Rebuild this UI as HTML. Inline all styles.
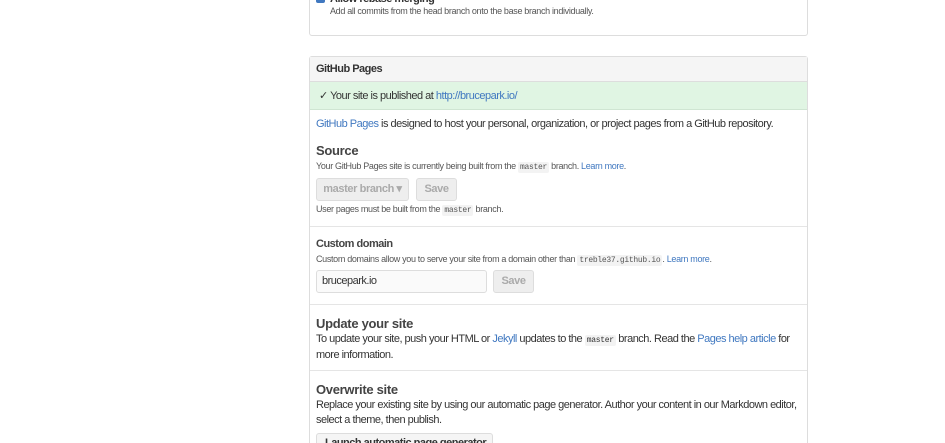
<!DOCTYPE html><html><head><style>
html,body{margin:0;width:945px;height:443px;overflow:hidden}
body{background:#fff;font-family:"Liberation Sans",sans-serif;color:#333;position:relative}
.a{position:absolute;white-space:nowrap}
.t{font-size:11px;letter-spacing:-0.5px}
.s{font-size:9px;letter-spacing:-0.33px;color:#555}
a{color:#4078c0;text-decoration:none}
code{font-family:"Liberation Mono",monospace;font-size:8px;letter-spacing:-0.3px;background:#f3f3f3;padding:1px 2px;border-radius:2px}
.btn{position:absolute;border:1px solid #ddd;background:#eee;border-radius:3px;color:#aaa;font-weight:bold;font-size:11px;letter-spacing:-0.4px;text-align:center;box-sizing:border-box}
.hr{position:absolute;left:310px;width:497px;height:1px;background:#e5e5e5}
</style></head><body>
<div style="position:absolute;left:309px;top:-5px;width:497px;height:39px;border:1px solid #ddd;border-radius:3px"></div>
<div class="a" style="left:316px;top:-6px;width:9px;height:9px;background:#4078c0;border-radius:2px"></div>
<div class="a t" style="left:330px;top:-7px;font-weight:bold">Allow rebase merging</div>
<div class="a s" style="left:330px;top:6px">Add all commits from the head branch onto the base branch individually.</div>

<div style="position:absolute;left:309px;top:56px;width:497px;height:400px;border:1px solid #ddd;border-radius:3px"></div>
<div style="position:absolute;left:310px;top:57px;width:497px;height:24px;background:#f5f5f5;border-bottom:1px solid #ddd"></div>
<div class="a t" style="left:316px;top:63px;font-weight:bold">GitHub Pages</div>
<div style="position:absolute;left:310px;top:82px;width:497px;height:27px;background:#e0f5e3;border-bottom:1px solid #cfe5d2"></div>
<div class="a t" style="left:319px;top:89px">✓ Your site is published at <a>http://brucepark.io/</a></div>
<div class="a t" style="left:316px;top:118px"><a>GitHub Pages</a> is designed to host your personal, organization, or project pages from a GitHub repository.</div>
<div class="a" style="left:316px;top:143px;font-size:13px;font-weight:bold;color:#444;letter-spacing:-0.3px">Source</div>
<div class="a s" style="left:316px;top:161px">Your GitHub Pages site is currently being built from the <code>master</code> branch. <a>Learn more</a>.</div>
<div class="btn" style="left:316px;top:178px;width:93px;height:23px;line-height:21px">master branch ▾</div>
<div class="btn" style="left:416px;top:178px;width:41px;height:23px;line-height:21px">Save</div>
<div class="a s" style="left:316px;top:204px">User pages must be built from the <code>master</code> branch.</div>
<div class="hr" style="top:226px"></div>
<div class="a t" style="left:316px;top:238px;font-weight:bold;color:#444">Custom domain</div>
<div class="a s" style="left:316px;top:254px">Custom domains allow you to serve your site from a domain other than <code>treble37.github.io</code>. <a>Learn more</a>.</div>
<div style="position:absolute;left:316px;top:270px;width:171px;height:23px;border:1px solid #ddd;border-radius:3px;background:#fafafa;box-sizing:border-box"></div>
<div class="a t" style="left:322px;top:275px">brucepark.io</div>
<div class="btn" style="left:493px;top:270px;width:41px;height:23px;line-height:21px">Save</div>
<div class="hr" style="top:304px"></div>
<div class="a" style="left:316px;top:316px;font-size:13px;font-weight:bold;color:#444;letter-spacing:-0.3px">Update your site</div>
<div class="a t" style="left:316px;top:332px;line-height:15px">To update your site, push your HTML or <a>Jekyll</a> updates to the <code>master</code> branch. Read the <a>Pages help article</a> for<br>more information.</div>
<div class="hr" style="top:370px"></div>
<div class="a" style="left:316px;top:382px;font-size:13px;font-weight:bold;color:#444;letter-spacing:-0.3px">Overwrite site</div>
<div class="a t" style="left:316px;top:398px;line-height:15px">Replace your existing site by using our automatic page generator. Author your content in our Markdown editor,<br>select a theme, then publish.</div>
<div style="position:absolute;left:316px;top:433px;width:175px;height:22px;border:1px solid #ddd;border-radius:3px;background:#f5f5f5"></div>
<div class="a t" style="left:325px;top:437px;font-weight:bold">Launch automatic page generator</div>
</body></html>
